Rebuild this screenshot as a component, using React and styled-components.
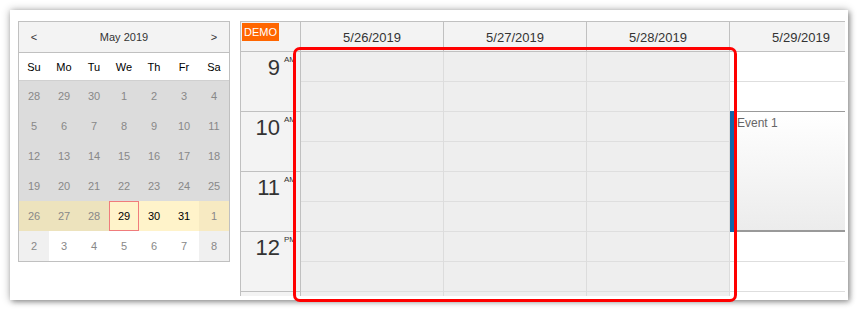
import React from "react";
import styled, { createGlobalStyle } from "styled-components";

const GlobalStyle = createGlobalStyle`
  html, body {
    margin: 0;
    padding: 0;
    background: #ffffff;
  }
  body {
    font-family: "Liberation Sans", Arial, sans-serif;
  }
`;

const Page = styled.div`
  position: relative;
  width: 860px;
  height: 311px;
  padding: 10px;
  box-sizing: border-box;
`;

const Panel = styled.div`
  width: 838px;
  height: 290px;
  box-sizing: border-box;
  padding: 11px 3px 0 8px;
  background: #ffffff;
  box-shadow: 0 0 8px rgba(0, 0, 0, 0.3), 2px 2px 5px rgba(0, 0, 0, 0.3);
  display: flex;
  align-items: flex-start;
  gap: 10px;
  overflow: hidden;
`;

/* ---------- navigator ---------- */

const Nav = styled.div`
  width: 212px;
  border: 1px solid #c0c0c0;
  box-sizing: border-box;
  font-size: 11px;
  flex: none;
`;

const NavHeader = styled.div`
  display: grid;
  grid-template-columns: 30px 1fr 30px;
  height: 30px;
  align-items: center;
  text-align: center;
  background: #f3f3f3;
  color: #333;
  border-bottom: 1px solid #c0c0c0;
  font-size: 11px;
`;

const NavArrow = styled.span`
  font-size: 11px;
  color: #333;
`;

const DayNames = styled.div`
  display: grid;
  grid-template-columns: repeat(7, 30px);
  height: 28px;
  border-bottom: 1px solid #d0d0d0;
  box-sizing: border-box;
`;

const DayName = styled.div`
  display: flex;
  align-items: center;
  justify-content: center;
  color: #000;
`;

const DayGrid = styled.div`
  display: grid;
  grid-template-columns: repeat(7, 30px);
  grid-auto-rows: 30px;
`;

const dayBg = {
  past: "#dcdcdc",
  weekPast: "#ede3bd",
  week: "#fff3ca",
  weekOut: "#f7eac2",
  outWeekend: "#f0f0f0",
  normal: "#ffffff",
};

const Day = styled.div`
  display: flex;
  align-items: center;
  justify-content: center;
  box-sizing: border-box;
  background: ${(p) => dayBg[p.$kind]};
  color: ${(p) => (p.$strong ? "#000" : "#888")};
  border: ${(p) => (p.$today ? "1px solid #f07c7c" : "none")};
`;

/* ---------- calendar ---------- */

const Calendar = styled.div`
  position: relative;
  width: 605px;
  height: 275px;
  box-sizing: border-box;
  border-top: 1px solid #c0c0c0;
  border-left: 1px solid #c0c0c0;
  overflow: hidden;
  flex: none;
`;

const HeaderRow = styled.div`
  display: flex;
  height: 29px;
  border-bottom: 1px solid #c0c0c0;
  background: #f3f3f3;
  width: max-content;
`;

const Corner = styled.div`
  width: 60px;
  box-sizing: border-box;
  border-right: 1px solid #c0c0c0;
  padding: 0 0 0 1px;
`;

const Demo = styled.span`
  display: inline-block;
  background: #ff6600;
  color: #ffffff;
  font-size: 11px;
  line-height: 18px;
  padding: 0 2px;
`;

const ColHeader = styled.div`
  width: 143px;
  box-sizing: border-box;
  border-right: 1px solid #c0c0c0;
  display: flex;
  align-items: center;
  justify-content: center;
  font-size: 13px;
  color: #333;
  padding-top: 1px;
`;

const Body = styled.div`
  display: flex;
  width: max-content;
`;

const RowHeader = styled.div`
  width: 60px;
  box-sizing: border-box;
  border-right: 1px solid #c0c0c0;
  background: #f3f3f3;
`;

const HourLabel = styled.div`
  height: 60px;
  box-sizing: border-box;
  border-bottom: 1px solid #c0c0c0;
  display: flex;
  justify-content: flex-end;
  align-items: flex-start;
  padding: 5px 4px 0 0;
  color: #333;
`;

const HourNum = styled.span`
  font-size: 22px;
  line-height: 22px;
`;

const HourSuffix = styled.span`
  font-size: 8px;
  line-height: 8px;
  margin: -1px 0 0 4px;
`;

const Column = styled.div`
  position: relative;
  width: 143px;
  box-sizing: border-box;
  border-right: 1px solid #dcdcdc;
  background: ${(p) => (p.$gray ? "#eeeeee" : "#ffffff")};
`;

const Cell = styled.div`
  height: 30px;
  box-sizing: border-box;
  border-bottom: 1px solid #dedede;
`;

const Event = styled.div`
  position: absolute;
  left: 0;
  right: 0;
  top: 59px;
  height: 121px;
  box-sizing: border-box;
  border-top: 1px solid #9a9a9a;
  border-bottom: 2px solid #999;
  background: linear-gradient(to bottom, #ffffff, #ececec);
  padding: 4px 0 0 7px;
  font-size: 12px;
  color: #666;
`;

const EventBar = styled.div`
  position: absolute;
  left: 0;
  top: -1px;
  bottom: -2px;
  width: 4px;
  background: #1066a8;
`;

const Highlight = styled.div`
  position: absolute;
  left: 293px;
  top: 47px;
  width: 444px;
  height: 255px;
  box-sizing: border-box;
  border: 3px solid #ff0000;
  border-radius: 7px;
  pointer-events: none;
`;

const weeks = [
  [
    ["28", "past"], ["29", "past"], ["30", "past"], ["1", "past"],
    ["2", "past"], ["3", "past"], ["4", "past"],
  ],
  [
    ["5", "past"], ["6", "past"], ["7", "past"], ["8", "past"],
    ["9", "past"], ["10", "past"], ["11", "past"],
  ],
  [
    ["12", "past"], ["13", "past"], ["14", "past"], ["15", "past"],
    ["16", "past"], ["17", "past"], ["18", "past"],
  ],
  [
    ["19", "past"], ["20", "past"], ["21", "past"], ["22", "past"],
    ["23", "past"], ["24", "past"], ["25", "past"],
  ],
  [
    ["26", "weekPast"], ["27", "weekPast"], ["28", "weekPast"],
    ["29", "week", true, true], ["30", "week", true], ["31", "week", true],
    ["1", "weekOut"],
  ],
  [
    ["2", "outWeekend"], ["3", "normal"], ["4", "normal"], ["5", "normal"],
    ["6", "normal"], ["7", "normal"], ["8", "outWeekend"],
  ],
];

const dayNames = ["Su", "Mo", "Tu", "We", "Th", "Fr", "Sa"];
const columns = [
  { label: "5/26/2019", gray: true },
  { label: "5/27/2019", gray: true },
  { label: "5/28/2019", gray: true },
  { label: "5/29/2019", gray: false, event: "Event 1" },
];
const hours = [
  ["9", "AM"],
  ["10", "AM"],
  ["11", "AM"],
  ["12", "PM"],
  ["", ""],
];

const Navigator = () => (
  <Nav>
    <NavHeader>
      <NavArrow>&lt;</NavArrow>
      <span>May 2019</span>
      <NavArrow>&gt;</NavArrow>
    </NavHeader>
    <DayNames>
      {dayNames.map((d) => (
        <DayName key={d}>{d}</DayName>
      ))}
    </DayNames>
    <DayGrid>
      {weeks.flat().map(([n, kind, strong, today], i) => (
        <Day key={i} $kind={kind} $strong={strong} $today={today}>
          {n}
        </Day>
      ))}
    </DayGrid>
  </Nav>
);

const DayCalendar = () => (
  <Calendar>
    <HeaderRow>
      <Corner>
        <Demo>DEMO</Demo>
      </Corner>
      {columns.map((c) => (
        <ColHeader key={c.label}>{c.label}</ColHeader>
      ))}
    </HeaderRow>
    <Body>
      <RowHeader>
        {hours.map(([h, s], i) => (
          <HourLabel key={i}>
            {h && <HourNum>{h}</HourNum>}
            {s && <HourSuffix>{s}</HourSuffix>}
          </HourLabel>
        ))}
      </RowHeader>
      {columns.map((c) => (
        <Column key={c.label} $gray={c.gray}>
          {Array.from({ length: 10 }).map((_, i) => (
            <Cell key={i} />
          ))}
          {c.event && (
            <Event>
              <EventBar />
              {c.event}
            </Event>
          )}
        </Column>
      ))}
    </Body>
  </Calendar>
);

export default function App() {
  return (
    <>
      <GlobalStyle />
      <Page>
        <Panel>
          <Navigator />
          <DayCalendar />
        </Panel>
        <Highlight />
      </Page>
    </>
  );
}
